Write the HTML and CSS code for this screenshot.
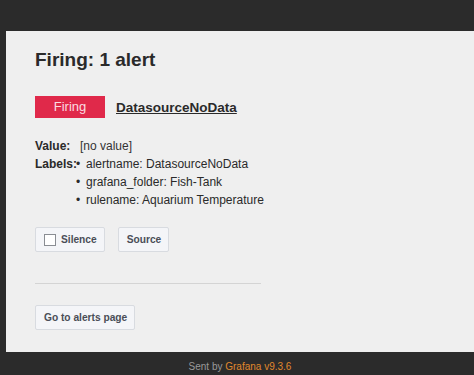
FILE: index.html
```html
<!DOCTYPE html>
<html lang="en">
<head>
    <meta charset="UTF-8">
    <meta name="viewport" content="width=device-width, initial-scale=1.0">
    <title>Firing: 1 alert</title>
    <link rel="stylesheet" href="styles.css">
</head>
<body>
    <div class="top-bar"></div>
    <div class="panel">
        <h2 class="title">Firing: 1 alert</h2>
        <div class="alert-head">
            <span class="badge">Firing</span>
            <a class="alert-name" href="#">DatasourceNoData</a>
        </div>
        <div class="details">
            <div class="row">
                <span class="key">Value:</span>
                <span class="val">[no value]</span>
            </div>
            <div class="row">
                <span class="key">Labels:</span>
                <ul class="labels">
                    <li>alertname: DatasourceNoData</li>
                    <li>grafana_folder: Fish-Tank</li>
                    <li>rulename: Aquarium Temperature</li>
                </ul>
            </div>
        </div>
        <div class="actions">
            <a class="btn" href="#"><span class="box"></span>Silence</a>
            <a class="btn" href="#">Source</a>
        </div>
        <hr class="divider">
        <a class="btn" href="#">Go to alerts page</a>
    </div>
    <div class="footer">Sent by <span class="brand">Grafana v9.3.6</span></div>
</body>
</html>
```

FILE: styles.css
```css
body {
    margin: 0;
    background: #2b2b2b;
    font-family: "Liberation Sans", Arial, sans-serif;
    color: #2a2a2a;
}

.top-bar {
    height: 31px;
}

.panel {
    margin-left: 6px;
    background: #efefef;
    padding: 17px 30px 22px 29px;
}

.title {
    margin: 0 0 24px;
    font-size: 19px;
    line-height: 24px;
    font-weight: bold;
}

.alert-head {
    display: flex;
    align-items: center;
    gap: 11px;
}

.badge {
    display: inline-block;
    width: 70px;
    height: 22px;
    line-height: 22px;
    background: #e0294a;
    color: #fbdbe0;
    text-align: center;
    font-size: 13px;
}

.alert-name {
    color: #2a2a2a;
    font-weight: bold;
    font-size: 13.5px;
}

.details {
    margin-top: 19px;
    font-size: 12px;
    line-height: 18px;
}

.row {
    display: flex;
}

.key {
    font-weight: bold;
    width: 45px;
}

.val {
    color: #333;
}

.labels {
    margin: 0 0 0 -4px;
    padding: 0;
    list-style: none;
}

.labels li::before {
    content: "\2022";
    display: inline-block;
    width: 10px;
}

.actions {
    display: flex;
    gap: 13px;
    margin-top: 18px;
}

.btn {
    display: inline-flex;
    align-items: center;
    gap: 5px;
    box-sizing: border-box;
    height: 25px;
    padding: 0 7px 0 8px;
    background: #f4f5f8;
    border: 1px solid #d8dbe0;
    border-radius: 2px;
    color: #4a4e57;
    font-size: 10.2px;
    font-weight: bold;
    text-decoration: none;
}

.box {
    width: 10px;
    height: 10px;
    border: 1px solid #8a8d93;
    background: #fff;
}

.divider {
    width: 226px;
    margin: 31px 0 21px;
    border: none;
    border-top: 1px solid #d4d4d4;
}

.footer {
    text-align: center;
    padding: 9px 0 0 6px;
    font-size: 10px;
    color: #9a9a9a;
}

.brand {
    color: #e0882c;
}
```
